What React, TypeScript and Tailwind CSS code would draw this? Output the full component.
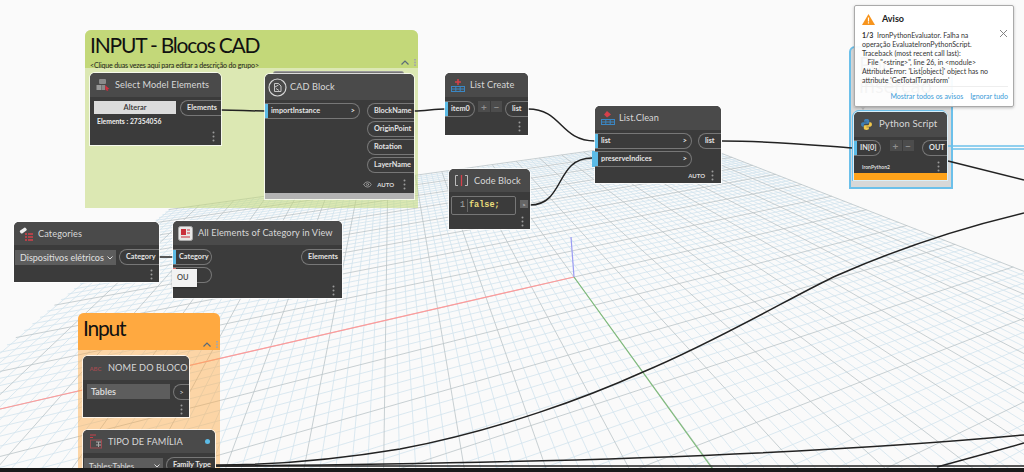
import React from "react";
import { Eye } from "lucide-react";

// perspective floor grid, from the two vanishing points of the axes
const VP1 = [1934, -36];
const VP2 = [390, 24];
const ORIGIN = [574, 277];
const A_MIN = -0.33;
const A_MAX = 0.274;
const B_MIN = -0.7;
const B_MAX = 0.8;
const A_STEP = 0.0304;
const B_STEP = 0.1;

function project(a: number, b: number) {
  const d = a + b + 1;
  const x = (a * VP1[0] + b * VP2[0] + ORIGIN[0]) / d;
  const y = (a * VP1[1] + b * VP2[1] + ORIGIN[1]) / d;
  return `${x.toFixed(1)} ${y.toFixed(1)}`;
}

function gridPath(major: boolean) {
  let d = "";
  const ia0 = Math.ceil(A_MIN / (A_STEP / 5));
  const ia1 = Math.floor(A_MAX / (A_STEP / 5));
  for (let i = ia0; i <= ia1; i++) {
    if ((i % 5 === 0) !== major) continue;
    const a = (i * A_STEP) / 5;
    d += `M${project(a, Math.max(B_MIN, -0.99 - a))}L${project(a, B_MAX)}`;
  }
  const ib0 = Math.ceil(B_MIN / (B_STEP / 5));
  const ib1 = Math.round(B_MAX / (B_STEP / 5));
  for (let i = ib0; i <= ib1; i++) {
    if ((i % 5 === 0) !== major) continue;
    const b = (i * B_STEP) / 5;
    d += `M${project(Math.max(A_MIN, -0.99 - b), b)}L${project(A_MAX, b)}`;
  }
  return d;
}

function Dots() {
  return (
    <svg width="3" height="11" viewBox="0 0 3 11" className="shrink-0">
      <circle cx="1.5" cy="1.5" r="1" fill="#9a9a9a" />
      <circle cx="1.5" cy="5.5" r="1" fill="#9a9a9a" />
      <circle cx="1.5" cy="9.5" r="1" fill="#9a9a9a" />
    </svg>
  );
}

function InPort({ label, w, arrow, bar = "bg-[#5cbbe6]" }: { label: string; w: string; arrow?: boolean; bar?: string }) {
  return (
    <div className={`relative flex h-4 items-center justify-between rounded-r-lg border border-l-0 border-[#777] pl-[6px] pr-1 text-[7.3px] font-bold text-[#e4e4e4] ${w}`}>
      <div className={`absolute left-0 top-0 h-full w-[3px] ${bar}`} />
      <span className="whitespace-nowrap">{label}</span>
      {arrow && <span>&gt;</span>}
    </div>
  );
}

function OutPort({ label, w }: { label: string; w: string }) {
  return (
    <div className={`flex h-4 items-center whitespace-nowrap rounded-l-lg border border-r-0 border-[#777] pl-[6px] text-[7.3px] font-bold text-[#e4e4e4] ${w}`}>
      {label}
    </div>
  );
}

function PlusMinus() {
  return (
    <div className="flex h-[11px] gap-px text-[10px] font-bold leading-[10px] text-[#8f8f8f]">
      <div className="flex w-[12px] items-center justify-center bg-[#4c4c4c]">+</div>
      <div className="flex w-[11px] items-center justify-center bg-[#4c4c4c]">−</div>
    </div>
  );
}

function Node({
  pos,
  title,
  icon,
  headH = "h-[24px]",
  titleCls = "",
  dot,
  children,
}: {
  pos: string;
  title: string;
  icon: React.ReactNode;
  headH?: string;
  titleCls?: string;
  dot?: boolean;
  children: React.ReactNode;
}) {
  return (
    <div className={`absolute flex flex-col overflow-hidden rounded-t-[5px] bg-[#3b3b3b] shadow-[0_0_0_1px_rgba(255,255,255,0.75)] ${pos}`}>
      <div className={`flex shrink-0 items-center bg-[#4a4a4a] ${headH}`}>
        <div className="flex w-[25px] shrink-0 items-center justify-center">{icon}</div>
        <span className={`whitespace-nowrap text-[9.2px] tracking-[0.1px] text-[#d8d8d8] ${titleCls}`}>{title}</span>
        {dot && <div className="ml-auto mr-[5px] h-[5px] w-[5px] rounded-full bg-[#5cbbe6]" />}
      </div>
      {children}
    </div>
  );
}

function Group({ pos, head, body, title, headH, desc }: { pos: string; head: string; body: string; title: string; headH: string; desc?: string }) {
  return (
    <div className={`absolute flex flex-col overflow-hidden rounded-t-[6px] ${pos} ${body}`}>
      <div className={`relative shrink-0 px-[5px] pt-px ${headH} ${head}`}>
        <div className="whitespace-nowrap text-[21px] leading-[27px] tracking-[-1.2px] text-[#111]">{title}</div>
        {desc && <div className="mt-[2px] whitespace-nowrap text-[7px] leading-[10px] tracking-[-0.15px] text-[#222]">{desc}</div>}
        <div className="absolute bottom-[2px] right-[2px] flex items-center gap-[5px]">
          <svg width="8" height="5" viewBox="0 0 8 5">
            <path d="M0.5 4.500 4 1l3.500 3.500" fill="none" stroke="#5b6b78" strokeWidth="1.2" />
          </svg>
          <svg width="2" height="7" viewBox="0 0 2 7">
            <rect y="0" width="2" height="1.500" fill="#a7a7a7" />
            <rect y="2.700" width="2" height="1.500" fill="#a7a7a7" />
            <rect y="5.400" width="2" height="1.500" fill="#a7a7a7" />
          </svg>
        </div>
      </div>
    </div>
  );
}

function GridIcon({ color = "#3b87c4" }: { color?: string }) {
  return (
    <g fill="none" stroke={color} strokeWidth="1">
      <rect x="1.500" y="8.500" width="13" height="5" />
      <path d="M5.800 8.500v5M10.200 8.500v5M1.500 11h13" />
    </g>
  );
}

function PythonLogo() {
  const d = "M12 2c-3 0-4.500 1-4.500 3v2h4.700v1H5.500C3.500 8 2 9.500 2 12c0 2.500 1.200 4 3 4h2v-2.500c0-1.500 1.300-3 3-3h4.500c1.500 0 2.500-1 2.500-2.500V5c0-2-1.700-3-5-3z";
  return (
    <svg width="13" height="13" viewBox="0 0 24 24">
      <path d={d} fill="#3f7fb5" />
      <path d={d} fill="#f2c84b" transform="rotate(180 12 12)" />
    </svg>
  );
}

const WARNING_LINES = [
  "operação EvaluateIronPythonScript.",
  "Traceback (most recent call last):",
  "\u00a0\u00a0\u00a0File \"<string>\", line 26, in <module>",
  "AttributeError: 'List[object]' object has no",
  "attribute 'GetTotalTransform'",
];

export default function App() {
  return (
    <div className="flex h-[472px] w-[1024px] flex-col overflow-hidden bg-[#fafafa] font-['Lato',sans-serif]">
      <div className="relative h-[468px] shrink-0 overflow-hidden">
        {/* floor */}
        <svg className="absolute inset-0" width="1024" height="468">
          <path d={gridPath(false)} stroke="#d2e3ed" strokeWidth="0.8" fill="none" />
          <path d={gridPath(true)} stroke="#bac4c8" strokeWidth="0.8" fill="none" />
          <path d="M574 277 0 409" stroke="#ff9a9a" strokeWidth="1.200" />
          <path d="M574 277 712 468" stroke="#7dbb78" strokeWidth="1.200" />
          <path d="M574 277 571 237" stroke="#9a9cf2" strokeWidth="1.200" />
        </svg>

        <Group
          pos="left-[85px] top-[30px] h-[178px] w-[333px]"
          head="bg-[#c3d879]"
          body="bg-[#c3d879]/55"
          headH="h-[38px]"
          title="INPUT - Blocos CAD"
          desc="<Clique duas vezes aqui para editar a descrição do grupo>"
        />
        <Group
          pos="left-[78px] top-[313px] h-[160px] w-[142px]"
          head="bg-[#ffa940]"
          body="bg-[#ffa940]/45"
          headH="h-[37px]"
          title="Input"
        />

        {/* python group, mostly under the warning */}
        <div className="absolute left-[849px] top-[46px] h-[143px] w-[104px] rounded-t-[6px] border-2 border-[#6cc0ea] bg-[#d8d8d8] px-2 pt-1 text-[20px] leading-[22px] text-[#333]">
          Por
          <br />
          inserção
        </div>

        {/* wires */}
        <svg className="absolute inset-0" width="1024" height="468" fill="none" stroke="#222" strokeWidth="1.500">
          <path d="M221 110C240 110 246 111 265 111" />
          <path d="M414 111C425 111 434 109 445 109" />
          <path d="M528 109C562 109 560 141 595 141" />
          <path d="M530 205C565 205 555 158 592 158" />
          <path d="M159 257H173" />
          <path d="M722 141C770 141 800 144 853 148" />
          <path d="M948 161 1024 180" />
          <path d="M1024 213C960 228 895 250 838 275C800 292 720 340 643 372C590 396 500 430 400 449C340 459 280 465 216 465" />
          <path d="M216 466C500 464 800 456 1024 435" />
          <path d="M216 466H1024" />
          <path d="M937 467 1024 443" />
          <path d="M947 146H1024" stroke="#6cc0ea" strokeWidth="1.500" />
          <path d="M953 149H1024" stroke="#6cc0ea" strokeWidth="1.500" />
        </svg>

        <Node
          pos="left-[90px] top-[73px] h-[72px] w-[131px]"
          title="Select Model Elements"
          icon={
            <svg width="14" height="14" viewBox="0 0 14 14">
              <rect x="3" y="1" width="7" height="5" rx="1" fill="#8a8a8a" />
              <rect x="0.500" y="7" width="5" height="5" fill="#9a9a9a" />
              <rect x="6" y="7" width="3" height="5" fill="#8a8a8a" />
              <path d="M9 7l4.500 4-2 .3.800 1.700-2.800-1z" fill="#d32f3f" />
            </svg>
          }
        >
          <div className="flex flex-1 justify-between pl-1 pt-[3px]">
            <div className="flex w-[86px] flex-col">
              <button className="mt-px h-[13px] w-[82px] bg-[#dcdcdc] text-center text-[7.5px] font-semibold leading-[13px] text-[#333]">Alterar</button>
              <span className="ml-[3px] mt-[1.500px] whitespace-nowrap text-[6.8px] font-bold leading-[11px] text-[#eee]">Elements : 27354056</span>
            </div>
            <OutPort label="Elements" w="w-[41px]" />
          </div>
          <div className="flex justify-end pb-[3px] pr-[6px]"><Dots /></div>
        </Node>

        {/* CAD Block, stacked look */}
        <div className="absolute left-[273px] top-[71px] h-[5px] w-[131px] rounded-t-[3px] border-t border-[#999] bg-[#777]" />
        <Node
          pos="left-[265px] top-[74px] h-[125px] w-[149px]"
          title="CAD Block"
          headH="h-[26px]"
          icon={
            <svg width="19" height="19" viewBox="0 0 19 19" fill="none" stroke="#d5d5d5">
              <circle cx="9.500" cy="9.500" r="8.500" strokeWidth="1.200" />
              <path d="M6.500 5.500h4l2.500 2.500v5.500h-6.500zM7 9l3.500-2M8 10.500l3 2" strokeWidth="0.900" />
            </svg>
          }
        >
          <div className="mt-[3px] flex justify-between">
            <InPort label="importInstance" w="w-[95px]" arrow />
            <div className="flex w-[47px] flex-col gap-[2px]">
              <OutPort label="BlockName" w="w-full" />
              <OutPort label="OriginPoint" w="w-full" />
              <OutPort label="Rotation" w="w-full" />
              <OutPort label="LayerName" w="w-full" />
            </div>
          </div>
          <div className="mt-auto flex items-center justify-end gap-[5px] pb-[3px] pr-[8px] text-[6px] font-bold text-[#ddd]">
            <Eye size={9} color="#aaa" />
            <span>AUTO</span>
            <span className="ml-[4px]"><Dots /></span>
          </div>
          <div className="h-[6px] shrink-0 bg-[#b3b3b3]" />
        </Node>

        <Node
          pos="left-[445px] top-[73px] h-[62px] w-[83px]"
          title="List Create"
          icon={
            <svg width="16" height="15" viewBox="0 0 16 15">
              <path d="M8 1v6M5 4h6" stroke="#d5404a" strokeWidth="1.500" />
              <GridIcon />
            </svg>
          }
        >
          <div className="mt-[4px] flex justify-between">
            <InPort label="item0" w="w-[30px]" />
            <PlusMinus />
            <OutPort label="list" w="w-[23px]" />
          </div>
          <div className="mt-auto flex justify-end pb-[3px] pr-[7px]"><Dots /></div>
        </Node>

        <Node
          pos="left-[595px] top-[106px] h-[77px] w-[126px]"
          title="List.Clean"
          headH="h-[24px]"
          titleCls="-ml-px"
          icon={
            <svg width="16" height="16" viewBox="0 0 16 16">
              <path d="M7 1l4 3.500L7 7.500 4 4.500z" fill="#d5404a" />
              <g transform="translate(0 1)"><GridIcon /></g>
            </svg>
          }
        >
          <div className="mt-[3px] flex justify-between">
            <div className="flex flex-col gap-[2px]">
              <InPort label="list" w="w-[97px]" arrow />
              <InPort label="preserveIndices" w="w-[97px]" arrow />
            </div>
            <OutPort label="list" w="w-[23px]" />
          </div>
          <div className="mt-auto flex items-center justify-end gap-[6px] pb-[2px] pr-[7px] text-[6px] font-bold text-[#ddd]">
            <span>AUTO</span>
            <Dots />
          </div>
        </Node>

        <div className="absolute left-[592px] top-[151px] h-[16px] w-[3px] bg-[#5cbbe6]" />

        <Node
          pos="left-[449px] top-[169px] h-[60px] w-[81px]"
          title="Code Block"
          headH="h-[23px]"
          icon={
            <svg width="13" height="11" viewBox="0 0 13 11" fill="none">
              <path d="M3 .5H.5v10H3M10 .5h2.500v10H10" stroke="#bbb" />
              <path d="M6.500 0v11" stroke="#d5404a" strokeWidth="1.300" />
            </svg>
          }
        >
          <div className="mt-[4px] flex justify-between px-[2px]">
            <div className="flex h-[19px] w-[65px] items-center rounded-[2px] border border-[#777] font-['Liberation_Mono',monospace] text-[8.500px]">
              <span className="w-[16px] border-r border-[#666] pr-[2px] text-right text-[#aaa]">1</span>
              <span className="pl-px font-bold text-[#e9dd7c]">false;</span>
            </div>
            <div className="mt-[4px] flex h-[8px] w-[8px] items-center justify-center bg-[#666] text-[6px] text-[#ddd]">&gt;</div>
          </div>
          <div className="mt-auto flex justify-end pb-[2px] pr-[6px]"><Dots /></div>
        </Node>

        <Node
          pos="left-[14px] top-[222px] h-[60px] w-[145px]"
          title="Categories"
          headH="h-[23px]"
          titleCls="-ml-px"
          icon={
            <svg width="15" height="14" viewBox="0 0 15 14">
              <rect x="1" y="2" width="7" height="3.500" rx="1" transform="rotate(-35 4 4)" fill="#eee" />
              <path d="M6 7h2M9 7h5M6 10h2M9 10h5M6 13h2M9 13h5" stroke="#d5404a" strokeWidth="1.300" />
            </svg>
          }
        >
          <div className="mt-[4px] flex justify-between pl-px">
            <div className="mt-px flex h-[15px] w-[101px] items-center justify-between bg-[#5d5d5d] pl-[5px] pr-[3px] text-[9px] text-[#e0e0e0]">
              <span className="whitespace-nowrap">Dispositivos elétricos</span>
              <svg width="6" height="4" viewBox="0 0 6 4"><path d="M.5.500 3 3 5.500.500" fill="none" stroke="#ddd" /></svg>
            </div>
            <OutPort label="Category" w="w-[40px]" />
          </div>
          <div className="mt-auto flex justify-end pb-[2px] pr-[6px]"><Dots /></div>
        </Node>

        <Node
          pos="left-[173px] top-[221px] h-[77px] w-[169px]"
          title="All Elements of Category in View"
          icon={
            <svg width="15" height="15" viewBox="0 0 15 15">
              <rect x="0.500" y="0.500" width="14" height="14" rx="2" fill="#e8e8e8" stroke="#aaa" />
              <rect x="3" y="3" width="5" height="6" fill="#c9303c" />
              <path d="M9 4h3M9 7h3M3 11h9" stroke="#c9303c" strokeWidth="1.200" />
            </svg>
          }
        >
          <div className="mt-[4px] flex justify-between">
            <div className="flex flex-col gap-[2px]">
              <InPort label="Category" w="w-[39px]" />
              <InPort label="" w="w-[39px]" bar="bg-[#e57373]" />
            </div>
            <OutPort label="Elements" w="w-[41px]" />
          </div>
          <div className="mt-auto flex justify-end pb-[2px] pr-[7px]"><Dots /></div>
        </Node>

        <div className="absolute left-[172px] top-[269px] flex h-[18px] w-[25px] items-center bg-[#f2f2f2] pl-[5px] text-[7.5px] font-semibold text-[#444] shadow-[0_1px_2px_rgba(0,0,0,0.3)]">
          OU
        </div>

        <Node
          pos="left-[83px] top-[356px] h-[61px] w-[106px]"
          title="NOME DO BLOCO"
          headH="h-[24px]"
          dot
          icon={<span className="text-[6px] font-bold text-[#9c4a50]">ABC</span>}
        >
          <div className="mt-[4px] flex justify-between pl-[4px]">
            <div className="flex h-[15px] w-[83px] items-center bg-[#5d5d5d] pl-[4px] text-[9px] font-semibold text-[#e0e0e0]">Tables</div>
            <div className="flex h-4 w-[16px] items-center justify-center rounded-l-lg border border-r-0 border-[#777] text-[7px] text-[#ddd]">&gt;</div>
          </div>
          <div className="mt-auto flex justify-end pb-[2px] pr-[6px]"><Dots /></div>
        </Node>

        <Node
          pos="left-[83px] top-[430px] h-[50px] w-[132px]"
          title="TIPO DE FAMÍLIA"
          headH="h-[23px]"
          dot
          icon={
            <svg width="14" height="15" viewBox="0 0 14 15">
              <path d="M1 1h6M1 3.500h3" stroke="#c9404a" />
              <rect x="1.500" y="6" width="11" height="8" fill="none" stroke="#9c4a50" />
              <path d="M7 8h5M7 11h5M9.500 8v5" stroke="#aaa" />
            </svg>
          }
        >
          <div className="mt-[4px] flex justify-between pl-px">
            <div className="mt-px flex h-[15px] w-[79px] items-center justify-between bg-[#5d5d5d] pl-[5px] pr-[3px] text-[8px] text-[#ddd]">
              <span>Tables:Tables</span>
              <svg width="6" height="4" viewBox="0 0 6 4"><path d="M.5.500 3 3 5.500.500" fill="none" stroke="#ddd" /></svg>
            </div>
            <OutPort label="Family Type" w="w-[49px]" />
          </div>
        </Node>

        {/* python node with selection outline */}
        <div className="absolute left-[852px] top-[110px] h-[71px] w-[96px] rounded-t-[7px] border border-[#6cc0ea] bg-[#6cc0ea]" />
        <Node
          pos="left-[854px] top-[112px] h-[68px] w-[93px]"
          title="Python Script"
          headH="h-[25px]"
          titleCls="text-[9.6px]"
          icon={<PythonLogo />}
        >
          <div className="mt-[3px] flex justify-between">
            <InPort label="IN[0]" w="w-[27px]" />
            <PlusMinus />
            <OutPort label="OUT" w="w-[25px]" />
          </div>
          <div className="flex flex-1 items-end justify-between pb-[1px] pl-[8px] pr-[7px] text-[5px] font-bold text-[#ddd]">
            <span className="pb-[1px]">IronPython2</span>
            <Dots />
          </div>
          <div className="h-[7px] shrink-0 bg-[#ffa31a]" />
        </Node>

        {/* warning bubble */}
        <div className="absolute left-[854px] top-[5px] flex h-[102px] w-[160px] flex-col rounded-[2px] border border-[#aaa] bg-white/95 px-[7px] shadow-[0_1px_3px_rgba(0,0,0,0.25)]">
          <div className="flex h-[24px] shrink-0 items-center gap-[7px] pt-[2px]">
            <svg width="13" height="11" viewBox="0 0 13 11">
              <path d="M6.500 0 13 11H0z" fill="#f7941d" />
              <path d="M6.500 3.500v4M6.500 8.300v1.300" stroke="#fff" strokeWidth="1.200" />
            </svg>
            <span className="text-[9px] font-bold text-[#222]">Aviso</span>
            <svg className="absolute right-[5px] top-[23px]" width="9" height="9" viewBox="0 0 9 9">
              <path d="M1 1l7 7M8 1 1 8" stroke="#777" strokeWidth="0.900" />
            </svg>
          </div>
          <div className="mt-[1px] text-[7px] leading-[9px] text-[#333]">
            <div className="whitespace-nowrap"><b>1/3</b>&nbsp; IronPythonEvaluator. Falha na</div>
            {WARNING_LINES.map((line) => (
              <div key={line} className="whitespace-nowrap">{line}</div>
            ))}
          </div>
          <div className="-mr-[2px] mt-auto flex justify-end gap-[7px] border-t border-[#eee] pb-[5px] pt-[4px] text-[7px] leading-[10px] text-[#3b9bd8]">
            <span>Mostrar todos os avisos</span>
            <span>Ignorar tudo</span>
          </div>
          <svg className="absolute -bottom-[4px] left-[5px]" width="6" height="4" viewBox="0 0 6 4">
            <path d="M0 0h6L3 4z" fill="#aaa" />
          </svg>
        </div>
      </div>
      <div className="h-[4px] shrink-0 bg-[#1a1a1a]" />
    </div>
  );
}
